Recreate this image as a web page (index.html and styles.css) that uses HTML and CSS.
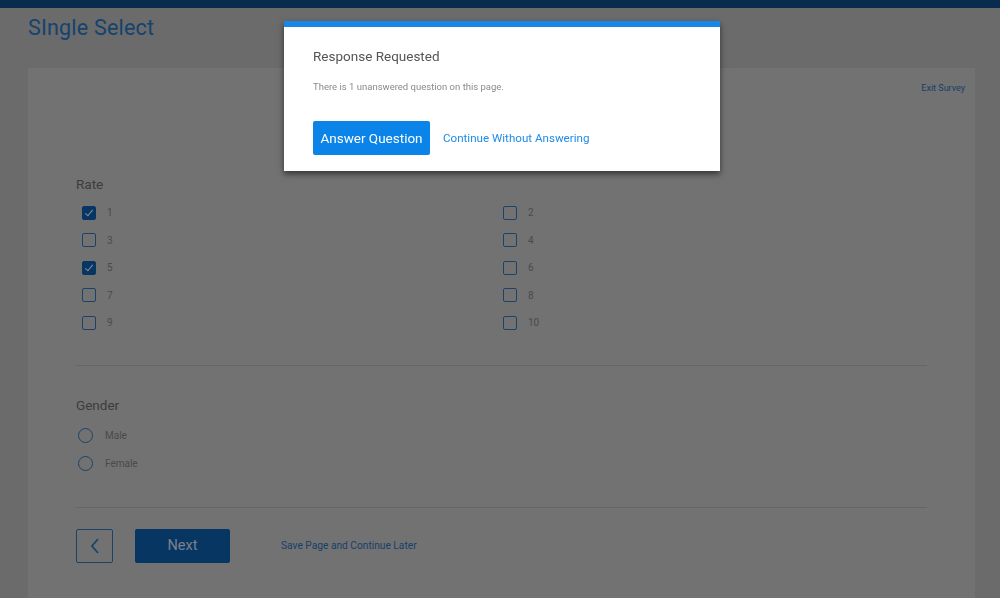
FILE: index.html
```html
<!DOCTYPE html>
<html lang="en">
<head>
    <meta charset="UTF-8">
    <title>SIngle Select</title>
    <link rel="stylesheet" href="styles.css">
</head>
<body>

<div class="topbar"></div>

<header class="page-head">
    <h1>SIngle Select</h1>
</header>

<main class="card">
    <div class="card-top">
        <a href="#" class="exit">Exit Survey</a>
    </div>

    <section class="question">
        <h2>Rate</h2>
        <ul class="options two-col">
            <li><span class="box checked"></span>1</li>
            <li><span class="box"></span>2</li>
            <li><span class="box"></span>3</li>
            <li><span class="box"></span>4</li>
            <li><span class="box checked"></span>5</li>
            <li><span class="box"></span>6</li>
            <li><span class="box"></span>7</li>
            <li><span class="box"></span>8</li>
            <li><span class="box"></span>9</li>
            <li><span class="box"></span>10</li>
        </ul>
    </section>

    <hr class="divider">

    <section class="question gender">
        <h2>Gender</h2>
        <ul class="options">
            <li><span class="radio"></span>Male</li>
            <li><span class="radio"></span>Female</li>
        </ul>
    </section>

    <hr class="divider">

    <div class="nav">
        <button class="back">
            <svg width="12" height="18" viewBox="0 0 12 18"><path d="M9 2 L3 9 L9 16" fill="none" stroke="currentColor" stroke-width="1.8"/></svg>
        </button>
        <button class="next">Next</button>
        <a href="#" class="save">Save Page and Continue Later</a>
    </div>
</main>

<!-- dialog shown when a question is left blank -->
<div class="backdrop"></div>
<div class="modal">
    <h3>Response Requested</h3>
    <p>There is 1 unanswered question on this page.</p>
    <div class="modal-actions">
        <button class="primary">Answer Question</button>
        <a href="#" class="link">Continue Without Answering</a>
    </div>
</div>

</body>
</html>
```

FILE: styles.css
```css
*{
    padding: 0;
    margin: 0;
    box-sizing: border-box;
}
body{
    background-color: #b2b2b2;
    font-family: Roboto, "Open Sans", sans-serif;
    width: 1000px;
    height: 598px;
    overflow: hidden;
}
a{
    text-decoration: none;
}
button{
    font-family: inherit;
    cursor: pointer;
}
ul{
    list-style: none;
}

.topbar{
    height: 8px;
    background-color: #0e4a80;
}
.page-head{
    height: 60px;
    padding: 7px 28px 0;
}
.page-head h1{
    font-weight: 400;
    font-size: 21.5px;
    line-height: 26px;
    color: #2470b8;
    letter-spacing: 0.2px;
}

.card{
    margin-left: 28px;
    width: 947px;
    height: 540px;
    background-color: #bebebe;
    padding: 0 48px;
}
.card-top{
    display: flex;
    justify-content: flex-end;
    margin-right: -38px;
    padding-top: 15px;
    height: 108px;
}
.exit{
    font-size: 9px;
    color: #276cb0;
}

.question h2{
    font-weight: 400;
    font-size: 13.5px;
    line-height: 16px;
    color: #666;
    margin-bottom: 7px;
}
.options li{
    display: flex;
    align-items: center;
    height: 27.5px;
    font-size: 10px;
    color: #7c7c7c;
}
.two-col{
    display: grid;
    grid-template-columns: 421px 1fr;
}
.box{
    width: 14px;
    height: 14px;
    border: 1.5px solid #2f6fae;
    border-radius: 2px;
    margin: 0 11px 0 6px;
    position: relative;
}
.box.checked{
    background-color: #0d5aa6;
    border-color: #0d5aa6;
}
.box.checked::after{
    content: "";
    position: absolute;
    left: 3.5px;
    top: 1px;
    width: 3px;
    height: 7px;
    border: solid #dcecff;
    border-width: 0 1.5px 1.5px 0;
    transform: rotate(40deg);
}
.radio{
    width: 15px;
    height: 15px;
    border: 1.5px solid #2f6fae;
    border-radius: 50%;
    margin: 0 12px 0 2px;
}

.divider{
    border: none;
    border-top: 1px solid #aaaaaa;
    margin: 28px 0 31px;
}
.gender h2{
    margin-bottom: 9px;
}
.gender .options li{
    height: 28px;
}
.gender + .divider{
    margin: 29px 0 21px;
}

.nav{
    display: flex;
    align-items: center;
}
.back{
    width: 37px;
    height: 34px;
    border: 1.5px solid #2f6fae;
    border-radius: 2px;
    background: none;
    color: #2f6fae;
    display: flex;
    align-items: center;
    justify-content: center;
    margin-right: 22px;
}
.next{
    width: 95px;
    height: 34px;
    border: none;
    border-radius: 2px;
    background-color: #0d5aa6;
    color: #c8d6e6;
    font-size: 14.5px;
    margin-right: 51px;
}
.save{
    font-size: 10.2px;
    color: #276cb0;
}

.backdrop{
    position: fixed;
    top: 0;
    left: 0;
    right: 0;
    bottom: 0;
    background-color: rgba(0,0,0,.4);
}
.modal{
    position: absolute;
    left: 284px;
    top: 21px;
    width: 436px;
    height: 150px;
    background-color: #fff;
    border-top: 6px solid #1787e8;
    box-shadow: 0 3px 6px rgba(0,0,0,.55);
    padding: 20px 28px 0 29px;
}
.modal h3{
    font-weight: 400;
    font-size: 13.5px;
    line-height: 18px;
    color: #555;
}
.modal p{
    font-size: 9.5px;
    line-height: 12px;
    color: #8a8a8a;
    margin-top: 16px;
}
.modal-actions{
    display: flex;
    align-items: center;
    margin-top: 28px;
}
.primary{
    width: 117px;
    height: 34px;
    border: none;
    border-radius: 2px;
    background-color: #0a84e8;
    color: #fff;
    font-size: 13.5px;
    margin-right: 13px;
}
.link{
    font-size: 11.6px;
    color: #1e8be8;
}
```
